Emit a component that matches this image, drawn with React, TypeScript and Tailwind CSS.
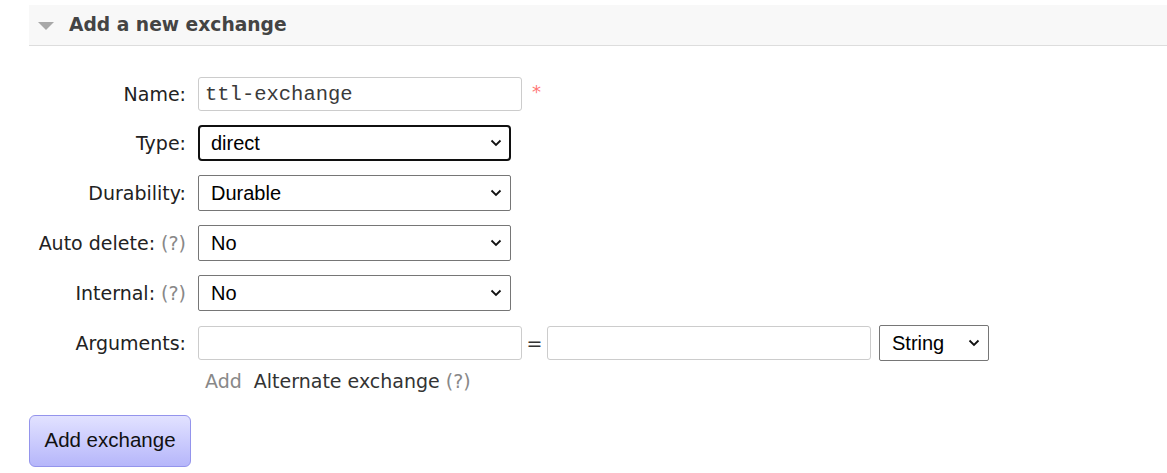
import React from "react";

const labelCls =
  "w-[157px] shrink-0 text-right text-[19px] text-[#222] whitespace-nowrap";

function Chevron() {
  return (
    <svg
      className="pointer-events-none absolute right-[9px] top-1/2 -translate-y-1/2"
      width="12"
      height="8"
      viewBox="0 0 12 8"
      fill="none"
    >
      <path d="M1.5 1.5 L6 6 L10.5 1.5" stroke="#111" strokeWidth="1.8" />
    </svg>
  );
}

function Select({
  value,
  focused,
  width = "w-[313px]",
}: {
  value: string;
  focused?: boolean;
  width?: string;
}) {
  return (
    <div className={`relative ${width} h-[36px]`}>
      <select
        defaultValue={value}
        className={`appearance-none w-full h-full bg-white text-black text-[20px] outline-none ${
          focused
            ? "border-2 border-[#101010] rounded-[4px] pl-[11px]"
            : "border border-[#767676] rounded-[2px] pl-[12px]"
        }`}
        style={{ fontFamily: '"Liberation Sans", Arial, sans-serif' }}
      >
        <option>{value}</option>
      </select>
      <Chevron />
    </div>
  );
}

function Row({
  label,
  help,
  children,
  h = "h-[36px]",
}: {
  label: string;
  help?: boolean;
  children: React.ReactNode;
  h?: string;
}) {
  return (
    <div className={`flex items-center ${h}`}>
      <div className={labelCls}>
        {label}
        {help && <span className="text-[#888]"> (?)</span>}
      </div>
      <div className="ml-[12px] flex items-center">{children}</div>
    </div>
  );
}

const inputCls =
  "w-[324px] h-[34px] border border-[#cccccc] rounded-[3px] bg-white outline-none";

export default function App() {
  return (
    <div
      className="w-[1167px] h-[473px] bg-white overflow-hidden"
      style={{ fontFamily: '"DejaVu Sans", Verdana, sans-serif' }}
    >
      <div className="mt-[5px] ml-[29px] h-[41px] bg-[#f8f8f8] border-b border-[#dddddd] flex items-center">
        <svg width="16" height="8" viewBox="0 0 16 8" className="ml-[9px] mt-[1px]">
          <path d="M0 0 H16 L8 8 Z" fill="#a8a8a8" />
        </svg>
        <span className="ml-[15px] text-[18.7px] font-bold text-[#444]">
          Add a new exchange
        </span>
      </div>

      <div className="ml-[29px] mt-[31px] flex flex-col gap-[14px]">
        <Row label="Name:" h="h-[34px]">
          <input
            defaultValue="ttl-exchange"
            className={`${inputCls} pl-[6px] text-[20.5px] text-[#3a3a3a]`}
            style={{ fontFamily: '"Liberation Mono", "Courier New", monospace' }}
          />
          <span className="ml-[10px] -mt-[6px] text-[18px] text-[#f77]">*</span>
        </Row>
        <Row label="Type:">
          <Select value="direct" focused />
        </Row>
        <Row label="Durability:">
          <Select value="Durable" />
        </Row>
        <Row label="Auto delete:" help>
          <Select value="No" />
        </Row>
        <Row label="Internal:" help>
          <Select value="No" />
        </Row>
        <Row label="Arguments:">
          <input className={inputCls} />
          <span className="w-[25px] text-center text-[19px] text-[#333]">=</span>
          <input className={inputCls} />
          <div className="ml-[8px]">
            <Select value="String" width="w-[110px]" />
          </div>
        </Row>
      </div>

      <div className="mt-[6px] ml-[205px] flex text-[19px]">
        <span className="text-[#888]">Add</span>
        <span className="ml-[12px] text-[#333]">
          Alternate exchange <span className="text-[#888]">(?)</span>
        </span>
      </div>

      <button
        className="mt-[19px] ml-[29px] w-[162px] h-[52px] rounded-[6px] border border-[#9494ec] bg-gradient-to-b from-[#e2e2ff] to-[#b6b6fa] text-[20.5px] text-[#111]"
        style={{ fontFamily: '"Liberation Sans", Arial, sans-serif' }}
      >
        Add exchange
      </button>
    </div>
  );
}
